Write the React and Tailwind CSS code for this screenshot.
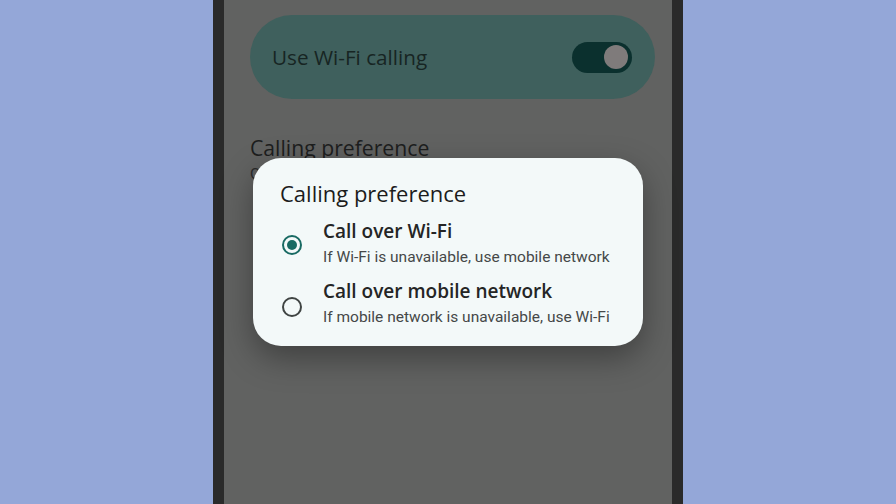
export default function App() {
  const font = { fontFamily: '"Open Sans", "Noto Sans", sans-serif' };
  const body = { fontFamily: 'Roboto, "Noto Sans", sans-serif' };
  return (
    <div className="w-[896px] h-[504px] bg-[#94a7d8] flex justify-center overflow-hidden" style={font}>
      <div className="relative w-[470px] h-full border-x-[11px] border-[#2a2a2a] bg-[#616261] pl-[26px] pr-[17px] pt-[15px]">
        <div className="h-[84px] rounded-full bg-[#3f605d] flex items-center justify-between pl-[22px] pr-[23px]">
          <span className="text-[20.7px] text-[#172523] leading-none">Use Wi-Fi calling</span>
          <div className="w-[60px] h-[31px] rounded-full bg-[#0b302e] flex items-center justify-end pr-[4px]">
            <div className="w-[24px] h-[24px] rounded-full bg-[#7f7b7b]" />
          </div>
        </div>
        <div className="mt-[35px] text-[21.2px] leading-[28px] text-[#1d1e1e]">Calling preference</div>
        <div className="mt-[2px] text-[15.5px] leading-[20px] text-[#2a2b2b]" style={body}>Call over Wi-Fi</div>

        <div className="absolute left-[29px] top-[158px] w-[390px] h-[188px] rounded-[28px] bg-[#f3f9f9] shadow-[0_12px_32px_rgba(0,0,0,0.35)] pl-[29px] pt-[20px]">
          <div className="text-[22px] leading-[30px] text-[#1b1c1c] -ml-[2px]">Calling preference</div>
          <div className="mt-[10px] flex flex-col gap-[11px]">
            <div className="flex items-start">
              <div className="mt-[17px] w-[20px] h-[20px] rounded-full border-[2.3px] border-[#186a63] flex items-center justify-center shrink-0">
                <div className="w-[10px] h-[10px] rounded-full bg-[#186a63]" />
              </div>
              <div className="ml-[21px]">
                <div className="text-[19px] leading-[26px] font-semibold text-[#242525]">Call over Wi-Fi</div>
                <div className="mt-[3px] text-[15.5px] leading-[20px] text-[#454848]" style={body}>If Wi-Fi is unavailable, use mobile network</div>
              </div>
            </div>
            <div className="flex items-start">
              <div className="mt-[19px] w-[20px] h-[20px] rounded-full border-[2.3px] border-[#3f4443] shrink-0" />
              <div className="ml-[21px]">
                <div className="text-[19px] leading-[26px] font-semibold text-[#242525]">Call over mobile network</div>
                <div className="mt-[3px] text-[15.5px] leading-[20px] text-[#454848]" style={body}>If mobile network is unavailable, use Wi-Fi</div>
              </div>
            </div>
          </div>
        </div>
      </div>
    </div>
  );
}
